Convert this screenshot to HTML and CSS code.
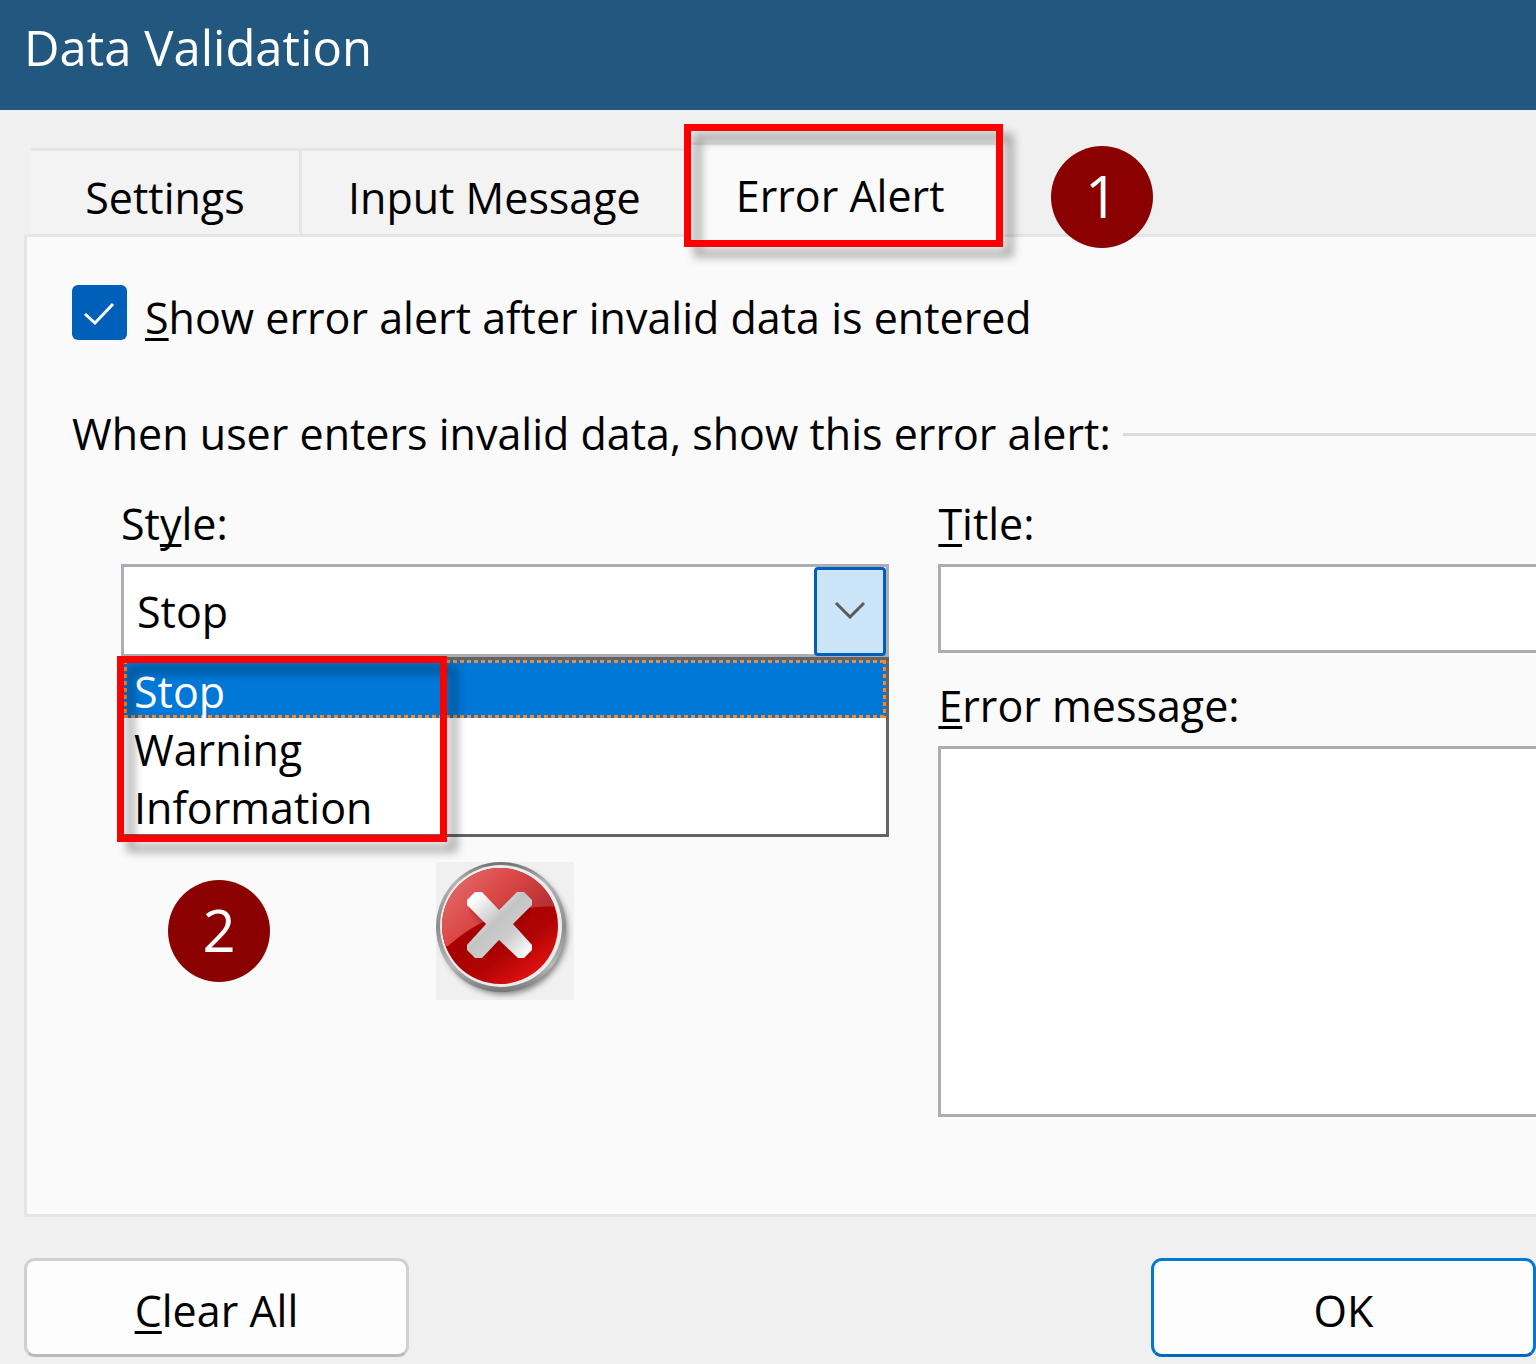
FILE: index.html
```html
<!DOCTYPE html>
<html lang="en">
<head>
  <meta charset="UTF-8">
  <meta name="viewport" content="width=device-width, initial-scale=1.0">
  <title>Data Validation</title>
  <link rel="stylesheet" href="styles.css">
</head>
<body>
  <header class="titlebar">
    <h1>Data Validation</h1>
  </header>

  <main>
    <div class="tabs" role="tablist">
      <button type="button" class="tab" role="tab">Settings</button>
      <button type="button" class="tab" role="tab">Input Message</button>
      <div class="tab-current">
        <button type="button" class="tab active" role="tab" aria-selected="true">Error Alert</button>
        <div class="marker marker-tab"></div>
      </div>
      <span class="badge badge-tab">1</span>
    </div>

    <section class="panel">
      <div class="check-row">
        <span class="check">
          <input type="checkbox" id="show-alert" checked>
          <svg viewBox="0 0 55 55" aria-hidden="true"><path d="M13 29l10 9 18-19"/></svg>
        </span>
        <label for="show-alert"><u>S</u>how error alert after invalid data is entered</label>
      </div>

      <h2 class="group-title">When user enters invalid data, show this error alert:</h2>

      <div class="columns">
        <div>
          <label for="style">St<u>y</u>le:</label>
          <div class="combo">
            <select id="style">
              <option>Stop</option>
              <option>Warning</option>
              <option>Information</option>
            </select>
            <span class="combo-arrow">
              <svg viewBox="0 0 32 18" aria-hidden="true"><path d="M2 2l14 14 14-14"/></svg>
            </span>
            <div class="dropdown">
              <ul role="listbox" aria-label="Style">
                <li role="option" class="selected" aria-selected="true">Stop</li>
                <li role="option">Warning</li>
                <li role="option">Information</li>
              </ul>
              <div class="marker marker-list"></div>
            </div>
          </div>
          <div class="preview">
            <span class="badge">2</span>
            <svg class="stop-icon" viewBox="0 0 138 138" aria-hidden="true">
              <defs>
                <linearGradient id="rim" x1="0" y1="0" x2="0" y2="1">
                  <stop offset="0" stop-color="#707070"/>
                  <stop offset=".15" stop-color="#b4b4b4"/>
                  <stop offset=".5" stop-color="#8c8c8c"/>
                  <stop offset=".8" stop-color="#b8b8b8"/>
                  <stop offset="1" stop-color="#757575"/>
                </linearGradient>
                <linearGradient id="red" x1=".2" y1=".1" x2=".8" y2=".95">
                  <stop offset="0" stop-color="#b00808"/>
                  <stop offset=".45" stop-color="#a80000"/>
                  <stop offset=".7" stop-color="#b00404"/>
                  <stop offset="1" stop-color="#e61212"/>
                </linearGradient>
                <linearGradient id="shine" x1="0" y1="0" x2="1" y2=".6">
                  <stop offset="0" stop-color="#e77a7a"/>
                  <stop offset=".5" stop-color="#dc4848"/>
                  <stop offset="1" stop-color="#a82828"/>
                </linearGradient>
                <linearGradient id="cross" x1="0" y1="0" x2="1" y2="1">
                  <stop offset=".1" stop-color="#ffffff"/>
                  <stop offset=".45" stop-color="#c4c4c4"/>
                  <stop offset=".65" stop-color="#cccccc"/>
                  <stop offset=".9" stop-color="#f6f6f6"/>
                </linearGradient>
                <filter id="soft" x="-20%" y="-20%" width="140%" height="140%">
                  <feGaussianBlur stdDeviation="3"/>
                </filter>
                <clipPath id="disc"><circle cx="64" cy="64" r="58"/></clipPath>
              </defs>
              <rect width="138" height="138" fill="#f0f0f0"/>
              <circle cx="68" cy="69" r="63" fill="#000" opacity=".5" filter="url(#soft)"/>
              <circle cx="65" cy="65" r="65" fill="url(#rim)"/>
              <circle cx="65" cy="64" r="61" fill="#ececec"/>
              <circle cx="64" cy="64" r="58" fill="url(#red)"/>
              <g clip-path="url(#disc)">
                <path d="M0 0H130V45C82 42 46 54 12 84L0 84Z" fill="url(#shine)"/>
                <path d="M42 44l44 43M86 44L42 87" stroke="#600" stroke-width="18" stroke-linecap="round" opacity=".3" filter="url(#soft)"/>
              </g>
              <path d="M31 43V38L39 30H46L63 48 81 30H88L96 38V43L77 62 96 83V88L88 96H82L63 78 46 96H39L31 88V83L50 62Z" fill="url(#cross)"/>
            </svg>
          </div>
        </div>

        <div class="fields">
          <label for="title"><u>T</u>itle:</label>
          <input type="text" id="title">
          <label for="message"><u>E</u>rror message:</label>
          <textarea id="message"></textarea>
        </div>
      </div>
    </section>

    <footer class="actions">
      <button type="button"><span><u>C</u>lear All</span></button>
      <button type="button" class="primary">OK</button>
    </footer>
  </main>
</body>
</html>
```

FILE: styles.css
```css
* {
  box-sizing: border-box;
}
body {
  margin: 0;
  background-color: #f0f0f0;
  color: #000;
  font-family: "Open Sans", "Noto Sans", sans-serif;
  font-size: 43px;
  line-height: 58px;
  overflow-x: hidden;
}
button, input, select, textarea {
  font: inherit;
  color: inherit;
  margin: 0;
}
h1, h2 {
  margin: 0;
  font-weight: normal;
}
label {
  display: block;
}
u {
  text-decoration-thickness: 3px;
  text-underline-offset: 4px;
  text-decoration-skip-ink: none;
}

.titlebar {
  background-color: #22587f;
  color: #fff;
  padding: 14px 24px 30px;
}
.titlebar h1 {
  font-size: 49px;
  line-height: 66px;
}

/* tabs */
.tabs {
  display: flex;
  align-items: flex-end;
  height: 124px;
  padding-left: 31px;
}
.tab {
  height: 86px;
  min-width: 271px;
  padding: 10px 46px 0;
  border: solid #e5e5e5;
  border-width: 3px 3px 0 0;
  background-color: #f3f3f3;
  white-space: nowrap;
}
.tab-current {
  position: relative;
  z-index: 1;
  margin: 0 0 -3px -2px;
}
.tab.active {
  display: block;
  height: 95px;
  border-width: 3px 0 0;
  padding: 10px 52px 0 48px;
  background-color: #fafafa;
}

/* red outlines and numbers */
.marker {
  position: absolute;
  border: 7px solid #f00;
  filter: drop-shadow(10px 10px 5px rgba(0, 0, 0, 0.35));
  pointer-events: none;
}
.marker-tab {
  inset: -18px -6px -10px -4px;
}
.marker-list {
  top: -1px;
  bottom: -5px;
  left: -4px;
  width: 43%;
}
.badge {
  flex: none;
  width: 102px;
  height: 102px;
  border-radius: 50%;
  background-color: #8b0000;
  color: #fff;
  font-size: 58px;
  line-height: 100px;
  text-align: center;
}
.badge-tab {
  position: relative;
  z-index: 1;
  margin: 0 0 -14px 54px;
}

/* panel */
.panel {
  margin-left: 24px;
  padding: 48px 0 97px 45px;
  border: 3px solid #e5e5e5;
  border-right: 0;
  background-color: #fafafa;
}
.check-row {
  display: flex;
  align-items: flex-start;
  gap: 18px;
}
.check-row label {
  padding-top: 4px;
}
.check {
  display: grid;
  width: 55px;
  height: 55px;
}
.check input, .check svg {
  grid-area: 1 / 1;
  width: 100%;
  height: 100%;
}
.check input {
  appearance: none;
  border-radius: 6px;
  background-color: #005fb8;
}
.check svg {
  fill: none;
  stroke: #fff;
  stroke-width: 3;
  pointer-events: none;
}
.check input:not(:checked) + svg {
  display: none;
}
.group-title {
  display: flex;
  align-items: center;
  gap: 12px;
  margin-top: 58px;
  font-size: 43px;
}
.group-title::after {
  content: "";
  flex: 1;
  height: 3px;
  background-color: #dcdcdc;
}
.columns {
  display: grid;
  grid-template-columns: 9fr 7fr;
  gap: 49px;
  margin: 32px 0 0 49px;
}

/* style list */
.combo {
  position: relative;
  margin-top: 11px;
}
.combo select {
  appearance: none;
  display: block;
  width: 100%;
  height: 93px;
  padding: 3px 90px 0 13px;
  border: 3px solid #abadb3;
  border-radius: 0;
  background-color: #fff;
}
.combo-arrow {
  position: absolute;
  top: 3px;
  right: 3px;
  display: grid;
  place-items: center;
  width: 72px;
  height: 89px;
  padding-bottom: 4px;
  border: 3px solid #005fb8;
  border-radius: 4px;
  background-color: #cce4f7;
  pointer-events: none;
}
.combo-arrow svg {
  width: 32px;
  fill: none;
  stroke: #5a5a5a;
  stroke-width: 3;
}
.dropdown {
  position: absolute;
  top: 100%;
  left: 0;
  right: 0;
}
.dropdown ul {
  margin: 0;
  padding: 0;
  list-style: none;
  border: 3px solid #646464;
  background-color: #fff;
}
.dropdown li {
  padding: 6px 0 0 10px;
  line-height: 52px;
}
.dropdown .selected {
  color: #fff;
  background:
    repeating-linear-gradient(90deg, #ff8728 0 4px, transparent 4px 7px) top / 100% 3px no-repeat,
    repeating-linear-gradient(90deg, #ff8728 0 4px, transparent 4px 7px) bottom / 100% 3px no-repeat,
    repeating-linear-gradient(#ff8728 0 4px, transparent 4px 7px) left / 3px 100% no-repeat,
    repeating-linear-gradient(#ff8728 0 4px, transparent 4px 7px) right / 3px 100% no-repeat,
    #0078d7;
}
.preview {
  display: flex;
  align-items: center;
  gap: 166px;
  margin: 205px 0 0 47px;
}
.stop-icon {
  width: 138px;
  height: 138px;
}

.fields input, .fields textarea {
  display: block;
  width: 100%;
  padding: 0 13px;
  border: 3px solid #abadb3;
  border-right: 0;
  border-radius: 0;
  background-color: #fff;
}
.fields input {
  height: 89px;
  margin: 11px 0 24px;
}
.fields textarea {
  height: 371px;
  margin-top: 11px;
  resize: none;
}

.actions {
  display: flex;
  justify-content: space-between;
  padding: 41px 0 7px 24px;
}
.actions button {
  width: 385px;
  height: 99px;
  padding: 6px 0 0;
  border: 3px solid #d0d0d0;
  border-bottom-color: #bababa;
  border-radius: 11px;
  background-color: #fdfdfd;
}
.actions .primary {
  border-color: #0078d4;
  border-bottom-color: #0067c0;
}
```
